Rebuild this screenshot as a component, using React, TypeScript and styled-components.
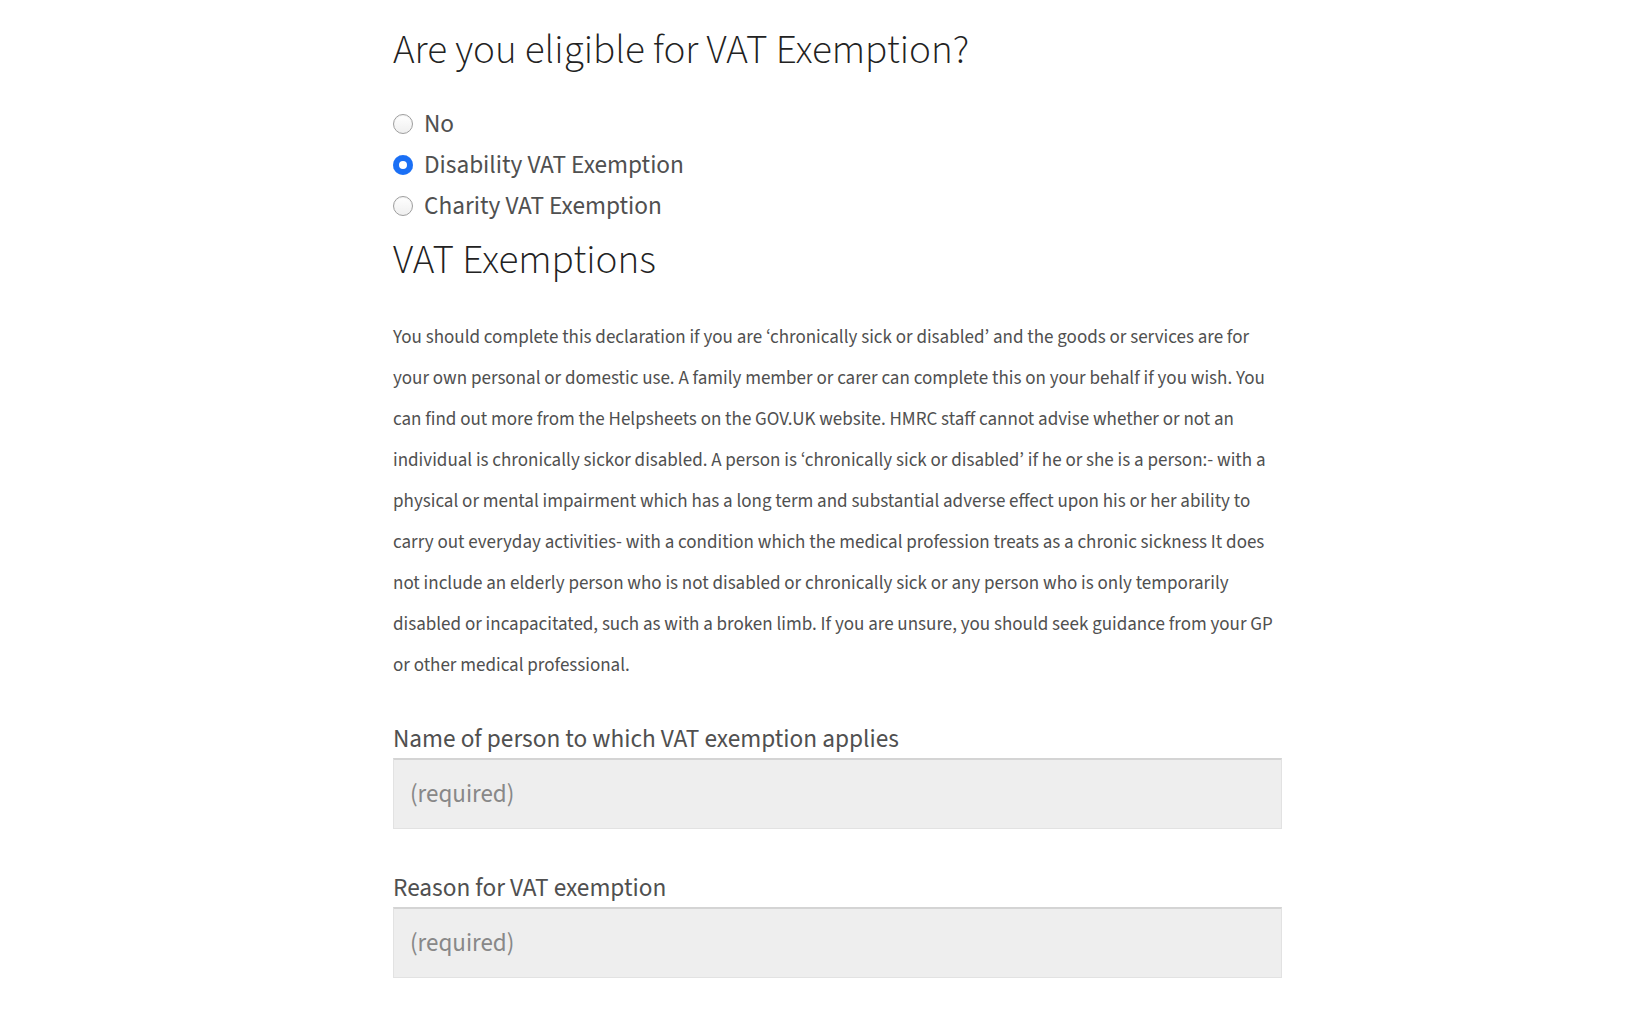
import { useState } from 'react';
import styled, { createGlobalStyle } from 'styled-components';

const GlobalStyle = createGlobalStyle`
  body {
    margin: 0;
    background: #fff;
    font-family: "Source Sans Pro", "Source Sans 3", Lato, "Open Sans", sans-serif;
    color: #555;
  }
`;

const Page = styled.div`
  width: 889px;
  margin-left: 393px;
  padding-bottom: 40px;
`;

const Title = styled.h2<{ $top: number }>`
  margin: ${p => p.$top}px 0 0;
  font-size: 41px;
  font-weight: 300;
  line-height: 48px;
  color: #222;
`;

const RadioList = styled.div`
  display: flex;
  flex-direction: column;
  margin-top: 29px;
`;

const RadioRow = styled.label`
  display: flex;
  align-items: center;
  height: 41px;
  gap: 11px;
  font-size: 25.3px;
  color: #505050;
  cursor: pointer;
`;

const RadioInput = styled.input`
  appearance: none;
  margin: 0;
  width: 20px;
  height: 20px;
  border-radius: 50%;
  border: 1px solid #9e9e9e;
  background: linear-gradient(#fff, #efefef);
  box-shadow: inset 0 1px 1px rgba(0, 0, 0, 0.05);
  flex-shrink: 0;

  &:checked {
    border: none;
    background: #1a6ff5;
    box-shadow: inset 0 0 0 6px #1a6ff5, inset 0 0 0 20px #fff;
  }
`;

const Text = styled.p`
  margin: 33px 0 0;
  font-size: 19px;
  line-height: 41px;
  color: #505050;
  white-space: nowrap;
`;

const Field = styled.div<{ $top: number }>`
  margin-top: ${p => p.$top}px;
`;

const FieldLabel = styled.label`
  display: block;
  font-size: 25.3px;
  line-height: 30px;
  color: #505050;
  margin-bottom: 4px;
`;

const TextInput = styled.input`
  display: block;
  box-sizing: border-box;
  width: 100%;
  height: 71px;
  padding: 0 16px;
  border: 1px solid #e2e2e2;
  border-top: 2px solid #d4d4d4;
  background: #eee;
  font-family: inherit;
  font-size: 25px;
  color: #333;
  outline: none;

  &::placeholder {
    color: #888;
  }
`;

const options = ['No', 'Disability VAT Exemption', 'Charity VAT Exemption'];

export default function App() {
  const [choice, setChoice] = useState('Disability VAT Exemption');

  return (
    <Page>
      <GlobalStyle />
      <Title $top={26}>Are you eligible for VAT Exemption?</Title>
      <RadioList>
        {options.map(o => (
          <RadioRow key={o}>
            <RadioInput type="radio" name="vat" checked={choice === o} onChange={() => setChoice(o)} />
            {o}
          </RadioRow>
        ))}
      </RadioList>
      <Title $top={10}>VAT Exemptions</Title>
      <Text>
        You should complete this declaration if you are ‘chronically sick or disabled’ and the goods or services are for<br />
        your own personal or domestic use. A family member or carer can complete this on your behalf if you wish. You<br />
        can find out more from the Helpsheets on the GOV.UK website. HMRC staff cannot advise whether or not an<br />
        individual is chronically sickor disabled. A person is ‘chronically sick or disabled’ if he or she is a person:- with a<br />
        physical or mental impairment which has a long term and substantial adverse effect upon his or her ability to<br />
        carry out everyday activities- with a condition which the medical profession treats as a chronic sickness It does<br />
        not include an elderly person who is not disabled or chronically sick or any person who is only temporarily<br />
        disabled or incapacitated, such as with a broken limb. If you are unsure, you should seek guidance from your GP<br />
        or other medical professional.
      </Text>
      <Field $top={38}>
        <FieldLabel htmlFor="vat-name">Name of person to which VAT exemption applies</FieldLabel>
        <TextInput id="vat-name" placeholder="(required)" />
      </Field>
      <Field $top={44}>
        <FieldLabel htmlFor="vat-reason">Reason for VAT exemption</FieldLabel>
        <TextInput id="vat-reason" placeholder="(required)" />
      </Field>
    </Page>
  );
}
